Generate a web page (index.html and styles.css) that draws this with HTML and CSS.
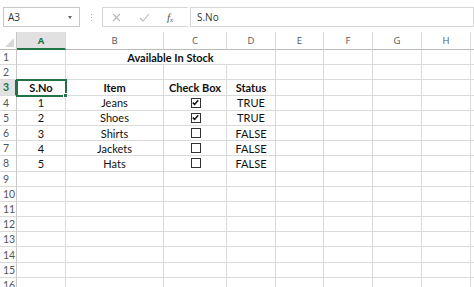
FILE: index.html
```html
<!DOCTYPE html>
<html>
<head>
<meta charset="utf-8">
<link rel="stylesheet" href="styles.css">
</head>
<body>
<div class="app">
  <div class="fbar">
    <div class="namebox"><span class="nb-text">A3</span><span class="nb-arrow"></span></div>
    <div class="dots"><i></i><i></i><i></i></div>
    <div class="btns">
      <svg class="ico x" width="9" height="9" viewBox="0 0 9 9"><path d="M1 1L8 8M8 1L1 8" stroke="#b8b8b8" stroke-width="1.1" fill="none"/></svg>
      <svg class="ico ok" width="11" height="9" viewBox="0 0 11 9"><path d="M1 5L4 8L10 1" stroke="#b8b8b8" stroke-width="1.1" fill="none"/></svg>
      <span class="fx">f<sub>x</sub></span>
    </div>
    <div class="formula">S.No</div>
  </div>
  <div class="sheet">
    <div class="ch corner"><span class="tri"></span></div>
    <div class="ch sel">A</div><div class="ch">B</div><div class="ch">C</div><div class="ch">D</div><div class="ch">E</div><div class="ch">F</div><div class="ch">G</div><div class="ch">H</div><div class="ch last"></div>

    <div class="rh">1</div><div class="c"></div><div class="c merge bold">Available In Stock</div><div class="c"></div><div class="c"></div><div class="c"></div><div class="c"></div><div class="c last"></div>
    <div class="rh">2</div><div class="c"></div><div class="c"></div><div class="c"></div><div class="c"></div><div class="c"></div><div class="c"></div><div class="c"></div><div class="c"></div><div class="c last"></div>
    <div class="rh rsel">3</div><div class="c bold active">S.No<span class="handle"></span></div><div class="c bold">Item</div><div class="c bold">Check Box</div><div class="c bold">Status</div><div class="c"></div><div class="c"></div><div class="c"></div><div class="c"></div><div class="c last"></div>
    <div class="rh">4</div><div class="c">1</div><div class="c">Jeans</div><div class="c"><span class="cb on"><svg width="7" height="7" viewBox="0 0 7 7"><path d="M0.8 3.6L2.6 5.4L6.2 1.2" stroke="#111" stroke-width="1.5" fill="none"/></svg></span></div><div class="c">TRUE</div><div class="c"></div><div class="c"></div><div class="c"></div><div class="c"></div><div class="c last"></div>
    <div class="rh">5</div><div class="c">2</div><div class="c">Shoes</div><div class="c"><span class="cb on"><svg width="7" height="7" viewBox="0 0 7 7"><path d="M0.8 3.6L2.6 5.4L6.2 1.2" stroke="#111" stroke-width="1.5" fill="none"/></svg></span></div><div class="c">TRUE</div><div class="c"></div><div class="c"></div><div class="c"></div><div class="c"></div><div class="c last"></div>
    <div class="rh">6</div><div class="c">3</div><div class="c">Shirts</div><div class="c"><span class="cb"></span></div><div class="c">FALSE</div><div class="c"></div><div class="c"></div><div class="c"></div><div class="c"></div><div class="c last"></div>
    <div class="rh">7</div><div class="c">4</div><div class="c">Jackets</div><div class="c"><span class="cb"></span></div><div class="c">FALSE</div><div class="c"></div><div class="c"></div><div class="c"></div><div class="c"></div><div class="c last"></div>
    <div class="rh">8</div><div class="c">5</div><div class="c">Hats</div><div class="c"><span class="cb"></span></div><div class="c">FALSE</div><div class="c"></div><div class="c"></div><div class="c"></div><div class="c"></div><div class="c last"></div>
    <div class="rh">9</div><div class="c"></div><div class="c"></div><div class="c"></div><div class="c"></div><div class="c"></div><div class="c"></div><div class="c"></div><div class="c"></div><div class="c last"></div>
    <div class="rh">10</div><div class="c"></div><div class="c"></div><div class="c"></div><div class="c"></div><div class="c"></div><div class="c"></div><div class="c"></div><div class="c"></div><div class="c last"></div>
    <div class="rh">11</div><div class="c"></div><div class="c"></div><div class="c"></div><div class="c"></div><div class="c"></div><div class="c"></div><div class="c"></div><div class="c"></div><div class="c last"></div>
    <div class="rh">12</div><div class="c"></div><div class="c"></div><div class="c"></div><div class="c"></div><div class="c"></div><div class="c"></div><div class="c"></div><div class="c"></div><div class="c last"></div>
    <div class="rh">13</div><div class="c"></div><div class="c"></div><div class="c"></div><div class="c"></div><div class="c"></div><div class="c"></div><div class="c"></div><div class="c"></div><div class="c last"></div>
    <div class="rh">14</div><div class="c"></div><div class="c"></div><div class="c"></div><div class="c"></div><div class="c"></div><div class="c"></div><div class="c"></div><div class="c"></div><div class="c last"></div>
    <div class="rh">15</div><div class="c"></div><div class="c"></div><div class="c"></div><div class="c"></div><div class="c"></div><div class="c"></div><div class="c"></div><div class="c"></div><div class="c last"></div>
    <div class="rh">16</div><div class="c"></div><div class="c"></div><div class="c"></div><div class="c"></div><div class="c"></div><div class="c"></div><div class="c"></div><div class="c"></div><div class="c last"></div>
  </div>
</div>
</body>
</html>
```
FILE: styles.css
```css
* { box-sizing: border-box; }
html, body { margin: 0; padding: 0; background: #fff; overflow: hidden; }
body { width: 474px; height: 287px; font-family: "Lato", "Open Sans", sans-serif; color: #222; }
.app { display: flex; flex-direction: column; }

.fbar { display: flex; align-items: center; height: 32px; padding: 7px 0 5px 3px; }
.namebox { position: relative; width: 77px; height: 20px; border: 1px solid #c9c9c9; display: flex; align-items: center; padding-left: 4px; font-family: "Open Sans", sans-serif; font-size: 10px; color: #333; }
.nb-text { flex: 1; }
.nb-arrow { width: 0; height: 0; border-left: 2.5px solid transparent; border-right: 2.5px solid transparent; border-top: 3px solid #666; margin-right: 7px; }
.dots { width: 22px; display: flex; flex-direction: column; align-items: center; gap: 2px; }
.dots i { display: block; width: 1px; height: 1px; background: #aaa; }
.btns { width: 86px; height: 20px; border: 1px solid #d6d6d6; border-right: none; display: flex; align-items: center; padding-left: 9px; }
.ico.x { margin-right: 18px; }
.ico.ok { margin-right: 17px; }
.fx { font-family: "Liberation Serif", serif; font-style: italic; font-size: 11px; color: #555; }
.fx sub { font-size: 7px; vertical-align: -1px; }
.formula { flex: 1; height: 20px; border: 1px solid #d6d6d6; margin-left: 2px; display: flex; align-items: center; padding-left: 6px; font-family: "Open Sans", sans-serif; font-size: 10px; color: #333; }

.sheet { display: grid; grid-template-columns: 17px 49px 98px 63px 49px 48px 49px 49px 49px 10px; grid-template-rows: 18px repeat(16, 15.2px); }
.ch { border-right: 1px solid #dadada; border-bottom: 1px solid #b9b9b9; display: flex; align-items: center; justify-content: center; font-family: "Open Sans", sans-serif; font-size: 9.5px; color: #555; }
.ch.corner { position: relative; border-right: 1px solid #c8c8c8; }
.tri { position: absolute; right: 2px; bottom: 2px; width: 0; height: 0; border-left: 9px solid transparent; border-bottom: 9px solid #d8d8d8; }
.ch.sel { background: #e1e1e1; color: #217346; font-weight: 700; border-bottom: 2px solid #217346; }
.ch.last, .c.last { border-right: none; }
.rh { border-right: 1px solid #c8c8c8; border-bottom: 1px solid #dadada; display: flex; align-items: center; padding-left: 3px; font-family: "Lato", sans-serif; font-size: 10.5px; color: #555; }
.rh.rsel { background: #e1e1e1; color: #217346; font-weight: 700; border-right: 2px solid #217346; }
.c { position: relative; border-right: 1px solid #dadada; border-bottom: 1px solid #dadada; display: flex; align-items: center; justify-content: center; font-size: 11px; color: #111; white-space: nowrap; }
.c.merge { grid-column: span 3; }
.bold { font-weight: 700; }
.c.active { outline: 2px solid #217346; outline-offset: -1px; z-index: 2; }
.handle { position: absolute; right: -3px; bottom: -3px; width: 5px; height: 5px; background: #217346; border: 1px solid #fff; }
.cb { width: 10px; height: 10px; border: 1px solid #333; background: #fff; display: flex; align-items: center; justify-content: center; margin-left: 1px; }
```
